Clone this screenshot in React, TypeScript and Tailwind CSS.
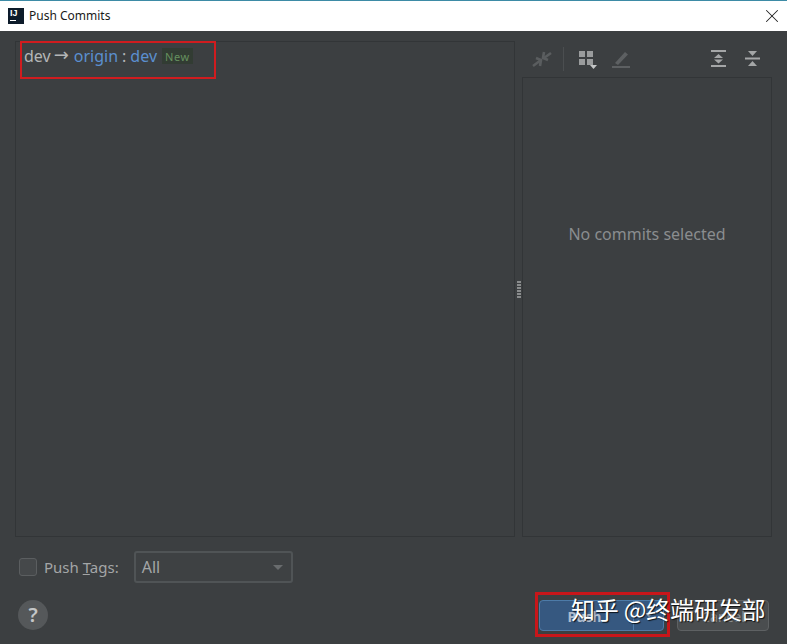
import React from 'react';
import { X } from 'lucide-react';

const font = { fontFamily: '"Noto Sans", "Open Sans", sans-serif' };

const IconFetch = () => (
  <svg width="20" height="20" viewBox="0 0 20 20" fill="none" stroke="#5a5d5f" strokeWidth="2.6">
    <path d="M1 17 L9 11" />
    <path d="M4 9 L9 11 L8 17" />
    <path d="M19 4 L12 9" />
    <path d="M12 3 L11 9 L16 11" />
  </svg>
);

const IconGroup = () => (
  <svg width="20" height="22" viewBox="0 0 20 22" fill="#9a9c9d">
    <rect x="1" y="3" width="6" height="6" />
    <rect x="9" y="3" width="6" height="6" />
    <rect x="1" y="11" width="6" height="6" />
    <rect x="9" y="11" width="6" height="6" />
    <path d="M12 17 L19 17 L15.5 21 Z" fill="#c4c6c7" />
  </svg>
);

const IconEdit = () => (
  <svg width="20" height="20" viewBox="0 0 20 20" fill="none">
    <path d="M4 14 L14 3 L17 5.5 L7 16 Z" fill="#5d6062" />
    <rect x="1" y="17" width="18" height="2" fill="#5d6062" />
  </svg>
);

const IconExpand = () => (
  <svg width="18" height="20" viewBox="0 0 18 20" fill="#a4a6a7">
    <rect x="1" y="1" width="15" height="2" />
    <rect x="1" y="16" width="15" height="2" />
    <path d="M8.5 5 L13 9 L4 9 Z" />
    <path d="M8.5 14.5 L13 10.5 L4 10.5 Z" />
  </svg>
);

const IconCollapse = () => (
  <svg width="18" height="20" viewBox="0 0 18 20" fill="#a4a6a7">
    <rect x="1" y="8.5" width="15" height="2" />
    <path d="M4 2 L13 2 L8.5 7 Z" />
    <path d="M4 17 L13 17 L8.5 12 Z" />
  </svg>
);

const LogoIJ = () => (
  <div className="w-[16px] h-[16px] bg-[#0d1b2a] flex flex-col px-[2px] pt-[1px]">
    <span className="text-white text-[9px] leading-[9px] font-bold" style={{ fontFamily: '"Liberation Sans", sans-serif' }}>IJ</span>
    <div className="w-[6px] h-px bg-white mt-[2px]" />
  </div>
);

export default function App() {
  return (
    <div className="relative w-[787px] h-[644px] overflow-hidden flex flex-col bg-[#3c3f41]" style={font}>
      <div className="h-[31px] shrink-0 bg-white border-t border-[#3d8ba6] flex items-center pl-2 pr-[4px]">
        <LogoIJ />
        <span className="ml-[5px] text-[12px] text-[#1a1a1a]">Push Commits</span>
        <X className="ml-auto text-[#222]" size={22} strokeWidth={1.1} />
      </div>

      <div className="flex px-[15px] pt-[10px] h-[506px] shrink-0">
        <div className="w-[500px] border border-[#323537] pl-[8px] pt-[2px]">
          <div className="flex items-center h-[24px] text-[16px] leading-none">
            <span className="text-[#b4b6b7]">dev</span>
            <span className="text-[#b4b6b7] ml-[3px] mr-[5px] text-[18px] -translate-y-[1px]" style={{ fontFamily: '"DejaVu Sans", sans-serif' }}>→</span>
            <span className="text-[#5b8fd0]">origin</span>
            <span className="text-[#b4b6b7] mx-[4px]">:</span>
            <span className="text-[#5b8fd0]">dev</span>
            <span className="ml-[5px] px-[3px] h-[16px] flex items-center bg-[#323c33] text-[#66905f] text-[11px] tracking-[0.5px]">New</span>
          </div>
        </div>

        <div className="w-[7px] flex flex-col items-center justify-center gap-[1px]">
          {[0, 1, 2, 3, 4, 5].map((i) => (
            <div key={i} className="w-[4px] h-[2px] bg-[#8a8c8d]" />
          ))}
        </div>

        <div className="w-[250px] flex flex-col">
          <div className="h-[36px] shrink-0 flex items-center pl-[10px] relative">
            <IconFetch />
            <div className="w-px h-[24px] bg-[#4b4e50] ml-[11px] mr-[14px]" />
            <IconGroup />
            <div className="w-[13px]" />
            <IconEdit />
            <div className="ml-auto flex items-center gap-[16px] pr-[10px]">
              <IconExpand />
              <IconCollapse />
            </div>
          </div>
          <div className="flex-1 border border-[#323537] flex justify-center pt-[144px]">
            <span className="text-[16px] leading-[24px] h-[24px] text-[#8a8d8f]">No commits selected</span>
          </div>
        </div>
      </div>

      <div className="flex items-center pl-[19px] h-[32px] mt-[14px] shrink-0 text-[15px] text-[#a4a6a7]">
        <div className="w-[18px] h-[18px] rounded-[3px] border border-[#5b5e60] bg-[#45484a]" />
        <span className="ml-[7px]">
          Push <span className="underline">T</span>ags:
        </span>
        <div className="ml-[15px] w-[159px] h-[32px] rounded-[3px] border-2 border-[#505456] flex items-center pl-[6px] pr-[8px] bg-[#3e4143]">
          <span className="text-[16px]">All</span>
          <div className="ml-auto w-0 h-0 border-x-[5px] border-x-transparent border-t-[5px] border-t-[#696c6e]" />
        </div>
      </div>

      <div className="flex items-center pl-[18px] pr-[18px] mt-[16px] h-[32px] shrink-0">
        <div className="w-[30px] h-[30px] rounded-full bg-[#55585a] flex items-center justify-center text-[#c4c6c7] text-[20px] font-semibold">?</div>
        <div className="ml-auto flex items-center gap-[13px]">
          <div className="w-[125px] h-[31px] rounded-[4px] border border-[#4d7ba8] bg-[#365880] flex text-[14px] font-bold text-[#aebccd]">
            <span className="flex-1 flex items-center justify-center pt-[3px] pr-[4px]">Push</span>
            <div className="w-[30px] border-l border-[#4d7ba8] flex items-center justify-center">
              <div className="w-0 h-0 border-x-[4px] border-x-transparent border-t-[4px] border-t-[#9fb2c7]" />
            </div>
          </div>
          <div className="w-[92px] h-[31px] rounded-[4px] border border-[#5e6163] bg-[#4a4d4f] flex items-center justify-center pt-[3px] text-[14px] text-[#8d9092]">Cancel</div>
        </div>
      </div>

      {/* annotation boxes and the watermark sit over the dialog */}
      <div className="absolute left-[20px] top-[41px] w-[196px] h-[38px] border-2 border-[#d01c1f]" />
      <div className="absolute left-[535px] top-[592px] w-[135px] h-[45px] border-[3px] border-[#c8161a]" />
      <div
        className="absolute left-[571px] top-[592px] text-[24px] leading-[34px] tracking-[-0.2px] text-white whitespace-nowrap [text-shadow:1px_1px_1px_rgba(0,0,0,0.8)]"
        style={{ fontFamily: '"Noto Sans CJK SC", sans-serif' }}
      >
        知乎 @终端研发部
      </div>
    </div>
  );
}
